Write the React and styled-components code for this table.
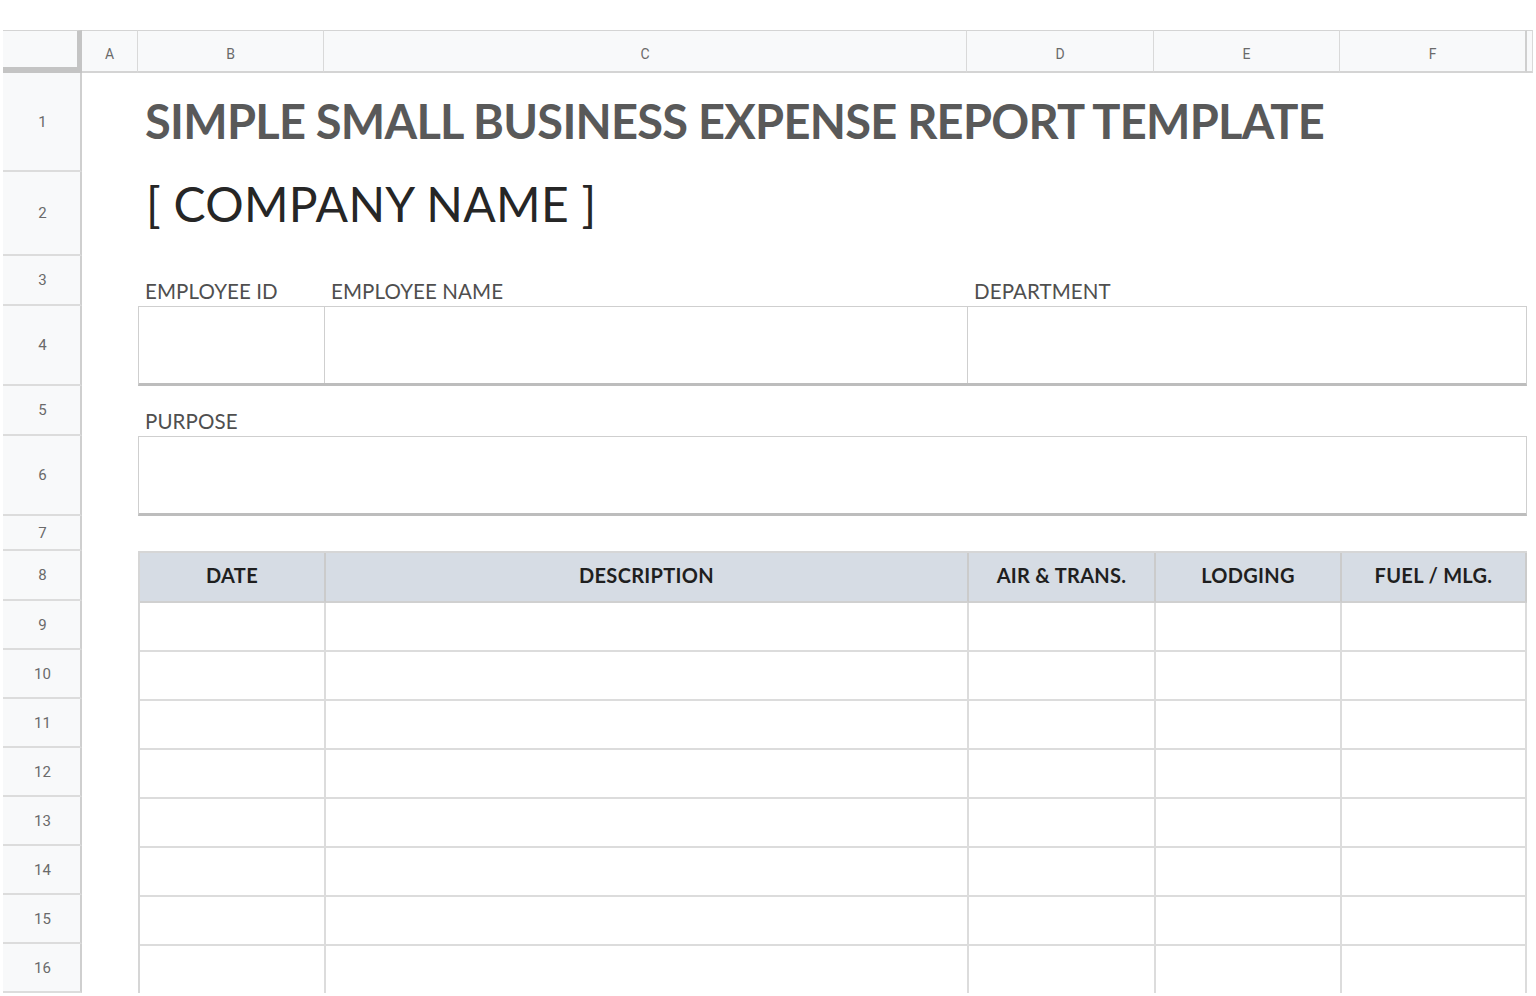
import React from "react";
import styled, { createGlobalStyle } from "styled-components";

const GlobalStyle = createGlobalStyle`
  html, body {
    margin: 0;
    padding: 0;
    background: #ffffff;
  }
  body {
    font-family: "Lato", "Liberation Sans", Arial, sans-serif;
    overflow: hidden;
  }
`;

const COLS = [56, 186, 643, 187, 186, 187];
const ROWS = [99, 84, 50, 80, 50, 80, 35, 50, 49, 49, 49, 49, 49, 49, 49, 49];
const LETTERS = ["A", "B", "C", "D", "E", "F"];

const Sheet = styled.div`
  margin: 30px 0 0 3px;
  display: grid;
  grid-template-columns: 79px ${COLS.map((c) => c + "px").join(" ")} 6px;
  grid-template-rows: 43px ${ROWS.map((r) => r + "px").join(" ")};
`;

const Corner = styled.div`
  grid-column: 1;
  grid-row: 1;
  background: #f8f9fa;
  border-top: 1px solid #d4d4d4;
  border-right: 5px solid #c4c4c4;
  border-bottom: 6px solid #c4c4c4;
  box-sizing: border-box;
`;

const ColHead = styled.div`
  grid-column: ${(p) => p.$col};
  grid-row: 1;
  display: flex;
  align-items: center;
  justify-content: center;
  padding-top: 5px;
  background: #f8f9fa;
  border-top: 1px solid #d4d4d4;
  border-bottom: 2px solid #d4d4d4;
  border-right: ${(p) => (p.$last ? "2px solid #cfcfcf" : "1px solid #d9d9d9")};
  box-sizing: border-box;
  font-family: Roboto, "Liberation Sans", Arial, sans-serif;
  font-size: 14px;
  color: #6a6a6a;
`;

const RowHead = styled.div`
  grid-column: 1;
  grid-row: ${(p) => p.$row};
  display: flex;
  align-items: center;
  justify-content: center;
  background: #f8f9fa;
  border-right: 2px solid #cfcfcf;
  border-bottom: 2px solid #dcdcdc;
  box-sizing: border-box;
  font-family: Roboto, "Liberation Sans", Arial, sans-serif;
  font-size: 15px;
  color: #6a6a6a;
  padding-left: 2px;
`;

const Title = styled.div`
  grid-column: 3 / 9;
  grid-row: 2;
  display: flex;
  align-items: center;
  padding: 0 0 4px 7px;
  font-size: 47px;
  font-weight: 700;
  color: #595959;
  white-space: nowrap;
  letter-spacing: -0.75px;
`;

const Company = styled.div`
  grid-column: 3 / 9;
  grid-row: 3;
  padding: 3px 0 0 8px;
  font-size: 48px;
  font-weight: 400;
  color: #262626;
  white-space: nowrap;
  letter-spacing: 0.3px;
`;

const Label = styled.div`
  grid-column: ${(p) => p.$col};
  grid-row: ${(p) => p.$row};
  display: flex;
  align-items: flex-end;
  padding: 0 0 3px 7px;
  font-size: 20.5px;
  color: #4f4f4f;
  letter-spacing: 0.1px;
  white-space: nowrap;
`;

const FieldBox = styled.div`
  grid-column: 3 / 8;
  grid-row: ${(p) => p.$row};
  display: grid;
  grid-template-columns: ${(p) => p.$cols};
  border: 1px solid #cfcfcf;
  border-bottom: 3px solid #bdbdbd;
  box-sizing: border-box;
`;

const FieldCell = styled.div`
  & + & {
    border-left: 1px solid #cfcfcf;
  }
`;

const Table = styled.div`
  grid-column: 3 / 8;
  grid-row: 9 / 18;
  display: grid;
  grid-template-columns: 186px 643px 187px 186px 1fr;
  grid-template-rows: 50px repeat(8, 49px);
  border-top: 2px solid #d6d6d6;
  border-left: 2px solid #d6d6d6;
  box-sizing: border-box;
`;

const HeadCell = styled.div`
  display: flex;
  align-items: center;
  justify-content: center;
  padding-bottom: 5px;
  background: #d6dce4;
  border-right: 2px solid #cbcbcb;
  border-bottom: 2px solid #d0d0d0;
  font-size: 20px;
  font-weight: 700;
  color: #1f1f1f;
  letter-spacing: 0.3px;
  white-space: nowrap;
`;

const Cell = styled.div`
  background: #ffffff;
  border-right: 2px solid #dcdcdc;
  border-bottom: 2px solid #dcdcdc;
`;

const HEADERS = ["DATE", "DESCRIPTION", "AIR & TRANS.", "LODGING", "FUEL / MLG."];

export default function App() {
  return (
    <>
      <GlobalStyle />
      <Sheet>
        <Corner />
        {LETTERS.map((l, i) => (
          <ColHead key={l} $col={i + 2} $last={i === LETTERS.length - 1}>
            {l}
          </ColHead>
        ))}
        <ColHead $col={8} />
        {ROWS.map((_, i) => (
          <RowHead key={i} $row={i + 2}>
            {i + 1}
          </RowHead>
        ))}

        <Title>SIMPLE SMALL BUSINESS EXPENSE REPORT TEMPLATE</Title>
        <Company>[ COMPANY NAME ]</Company>

        <Label $col={3} $row={4}>EMPLOYEE ID</Label>
        <Label $col={4} $row={4}>EMPLOYEE NAME</Label>
        <Label $col="5 / 8" $row={4}>DEPARTMENT</Label>
        <FieldBox $row={5} $cols="185px 643px 1fr">
          <FieldCell />
          <FieldCell />
          <FieldCell />
        </FieldBox>

        <Label $col="3 / 8" $row={6}>PURPOSE</Label>
        <FieldBox $row={7} $cols="1fr">
          <FieldCell />
        </FieldBox>

        <Table>
          {HEADERS.map((h) => (
            <HeadCell key={h}>{h}</HeadCell>
          ))}
          {Array.from({ length: 8 * HEADERS.length }).map((_, i) => (
            <Cell key={i} />
          ))}
        </Table>
      </Sheet>
    </>
  );
}
